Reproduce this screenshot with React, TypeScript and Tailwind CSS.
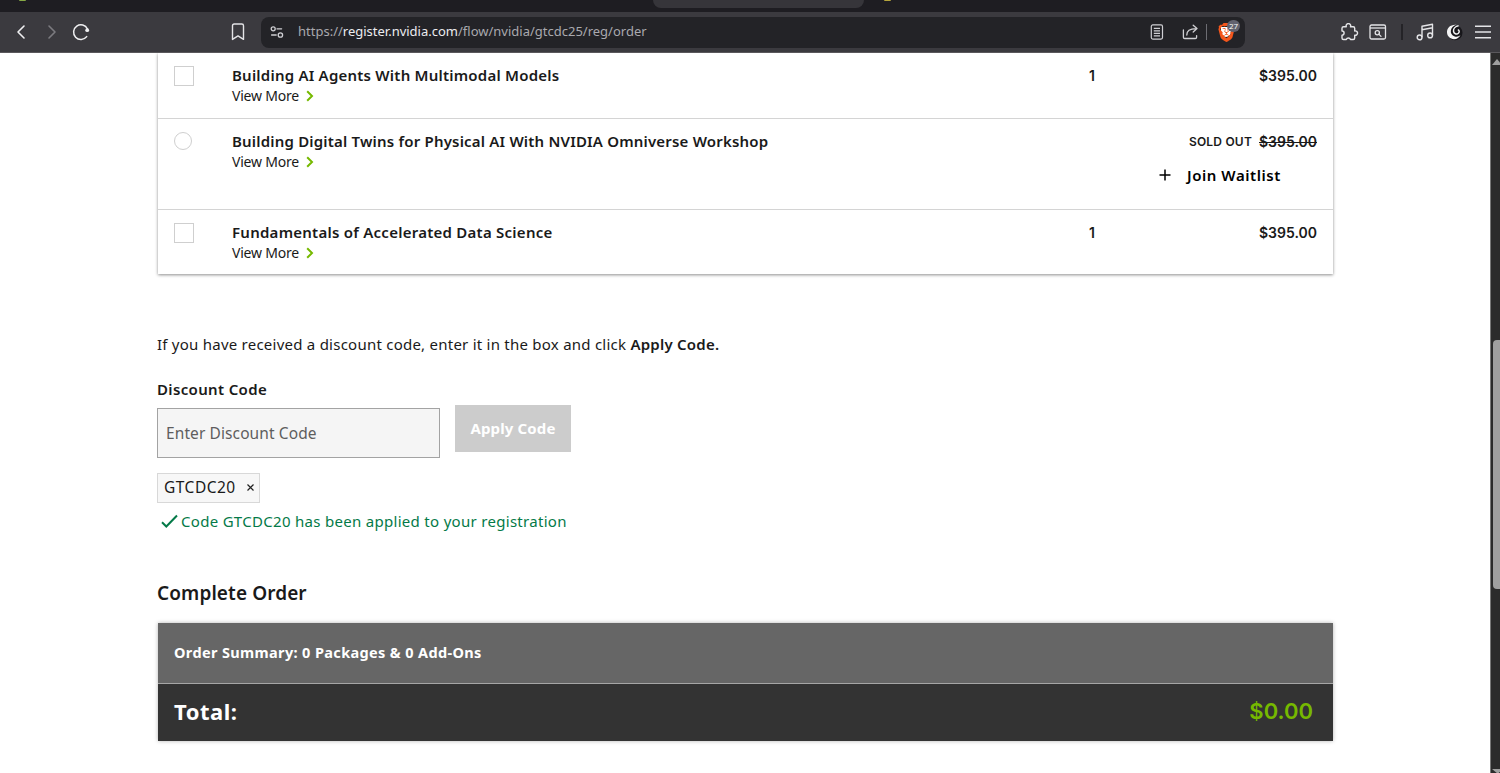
import { ChevronLeft, ChevronRight } from "lucide-react";
import { SiBrave } from "react-icons/si";

type Workshop = {
  title: string;
  titleClass: string;
  soldOut?: boolean;
  rowClass: string;
};

const workshops: Workshop[] = [
  {
    title: "Building AI Agents With Multimodal Models",
    titleClass: "tracking-[0.22px]",
    rowClass: "h-[66px] border-b",
  },
  {
    title: "Building Digital Twins for Physical AI With NVIDIA Omniverse Workshop",
    titleClass: "tracking-[0.19px]",
    soldOut: true,
    rowClass: "h-[91px] border-b",
  },
  {
    title: "Fundamentals of Accelerated Data Science",
    titleClass: "tracking-[0.25px]",
    rowClass: "h-[64px]",
  },
];

function TabStrip() {
  return (
    <div className="flex h-3 items-start bg-[#1e1d22]">
      <div className="ml-[19px] h-px w-[7px] rounded-b-full bg-[#86a845]" />
      <div className="ml-[627px] h-2 w-[211px] rounded-b-lg bg-[#36353a]" />
      <div className="ml-5 h-px w-[7px] rounded-b-full bg-[#b5a53c]" />
    </div>
  );
}

function AddressBar() {
  return (
    <div className="ml-4 flex h-[31px] w-[984px] items-center rounded-lg bg-[#232327]">
      <svg className="ml-[9px]" width="14" height="14" viewBox="0 0 14 14" fill="none" stroke="#cfcfd3" strokeWidth="1.3" strokeLinecap="round">
        <circle cx="3.2" cy="3.8" r="2" />
        <path d="M7 3.8h4.6M1.6 10h4.6" />
        <circle cx="10.4" cy="10" r="2.2" />
      </svg>
      <span className="ml-[14px] font-['Noto_Sans',sans-serif] text-[13px] whitespace-nowrap text-[#a9a9ae]">
        https://<span className="text-[#ececef]">register.nvidia.com</span>/flow/nvidia/gtcdc25/reg/order
      </span>
      <div className="ml-auto flex items-center">
        <svg width="14" height="16" viewBox="0 0 14 16" fill="none" stroke="#cfcfd3" strokeWidth="1.2">
          <rect x="1.3" y="0.9" width="11.2" height="14.2" rx="1.5" />
          <path d="M3.8 4.4h6.2M3.8 6.9h6.2M3.8 9.4h6.2M3.8 11.9h6.2" />
        </svg>
        <svg className="ml-[18px]" width="17" height="16" viewBox="0 0 17 16" fill="none" stroke="#cfcfd3" strokeWidth="1.3" strokeLinecap="round" strokeLinejoin="round">
          <path d="M1.4 6v7.2q0 1.3 1.3 1.3h10.6q1.3 0 1.3-1.300v-1.600" />
          <path d="M4.800 11c0-4 2.600-6.400 9.600-6.400M11.200 1.200l3.800 3.400-3.800 3.400" />
        </svg>
        <div className="ml-[7px] h-4 w-px bg-[#6d6d73]" />
        <div className="relative mr-[11px] ml-[11px] flex h-[18px] w-4 items-center justify-center">
          <div className="absolute top-1 left-[3px] h-[10px] w-[10px] rounded-b-full bg-white" />
          <SiBrave className="relative h-[19px] w-[19px] shrink-0 text-[#f4561c]" />
          <div className="absolute -top-[3px] left-[9px] flex h-3 w-[13px] items-center justify-center rounded-full bg-[#62626f] font-['Open_Sans',sans-serif] text-[8px] leading-3 text-white">
            27
          </div>
        </div>
      </div>
    </div>
  );
}

function Toolbar() {
  return (
    <div className="flex h-[41px] items-center border-b border-[#5a585c] bg-[#3b3a3f]">
      <ChevronLeft className="ml-[9px] text-[#f0f0f2]" size={24} strokeWidth={1.6} />
      <ChevronRight className="ml-[7px] text-[#7c7b80]" size={24} strokeWidth={1.6} />
      <svg className="ml-2" width="18" height="18" viewBox="0 0 18 18" fill="none" stroke="#f0f0f2" strokeWidth="1.5" strokeLinecap="round">
        <path d="M14.700 13.600A7.300 7.300 0 1 1 15.500 6" />
        <circle cx="15.200" cy="7.200" r="1.900" fill="#f0f0f2" stroke="none" />
      </svg>
      <svg className="ml-[141px]" width="14" height="18" viewBox="0 0 14 18" fill="none" stroke="#e4e4e7" strokeWidth="1.4" strokeLinejoin="round">
        <path d="M1.500 2.700q0-1.700 1.700-1.700h7.600q1.700 0 1.700 1.700v13.700L7 12.900 1.500 16.400z" />
      </svg>
      <AddressBar />
      <svg className="ml-[95px]" width="19" height="19" viewBox="0 0 19 19" fill="none" stroke="#e4e4e7" strokeWidth="1.400" strokeLinejoin="round" strokeLinecap="round">
        <path d="M3.500 3.800h2.800a2.300 2.300 0 1 1 4.200 0h2.700q1.500 0 1.500 1.500v2.700a2.200 2.200 0 1 1 0 4.200v2.800q0 1.500-1.500 1.500h-2.700a2.200 2.200 0 0 0-4.200 0H3.500Q2 16.500 2 15v-2.800a2.100 2.100 0 0 0 0-4.200V5.300q0-1.500 1.500-1.500z" />
      </svg>
      <svg className="ml-[10px]" width="18" height="16" viewBox="0 0 18 16" fill="none" stroke="#e4e4e7" strokeWidth="1.300">
        <rect x="1" y="1" width="15.500" height="14" rx="1.500" />
        <path d="M1 4h15.500" />
        <circle cx="8.300" cy="8.700" r="2.100" />
        <path d="M10 10.400l2 2" strokeLinecap="round" />
      </svg>
      <div className="ml-[14px] h-4 w-[2px] bg-[#242327]" />
      <svg className="ml-[13px]" width="18" height="18" viewBox="0 0 18 18" fill="none" stroke="#e4e4e7" strokeWidth="1.400" strokeLinejoin="round">
        <path d="M6 14.300V3.300l10.500-2v11M6 6.800l10.500-2" />
        <circle cx="3.600" cy="14.400" r="2.400" />
        <circle cx="14.100" cy="12.400" r="2.400" />
      </svg>
      <svg className="ml-[12px]" width="17" height="17" viewBox="0 0 17 17">
        <circle cx="9" cy="8.800" r="7.500" fill="#17161a" />
        <path d="M10.500.8C4.500.2.800 4 1 8.600c.2 3.900 3.300 6.600 7 6.600 3 0 5.400-1.500 6.400-3.900-1.500 1.200-3.600 1.700-5.600 1.100C5.800 11.500 4.300 9 4.900 6.200 5.500 3.600 7.700 1.500 10.500.8z" fill="#f4f4f5" />
        <path d="M12.600 1.800C9.400 2.300 7.300 4.600 7.500 7.100c.2 2.500 3 3.800 4.900 2.200 1.300-1.100 1-3.200-.6-3.600" fill="none" stroke="#f4f4f5" strokeWidth="1.500" />
      </svg>
      <svg className="ml-[11px]" width="18" height="14" viewBox="0 0 18 14" stroke="#e4e4e7" strokeWidth="1.400">
        <path d="M1 1.200h16M1 7h16M1 12.800h16" />
      </svg>
    </div>
  );
}

function WorkshopRow({ title, titleClass, soldOut, rowClass }: Workshop) {
  return (
    <div className={`flex border-[#d4d4d4] pt-[13px] pr-4 pl-4 ${rowClass}`}>
      <div className="w-[58px]">
        {soldOut ? (
          <div className="h-[18px] w-[18px] rounded-full border border-[#cfcfcf]" />
        ) : (
          <div className="h-5 w-5 border border-[#cfcfcf]" />
        )}
      </div>
      <div className="flex-1">
        <div className={`mb-[2px] text-[15px] leading-[18px] font-semibold ${titleClass}`}>{title}</div>
        <div className="flex h-5 items-center text-sm leading-5 tracking-[-0.2px]">
          View More
          <svg className="ml-[7px]" width="8" height="12" viewBox="0 0 8 12" fill="none" stroke="#76b900" strokeWidth="2">
            <path d="M1.200 1.200L6 6l-4.800 4.800" />
          </svg>
        </div>
      </div>
      {soldOut ? (
        <div className="w-[158px]">
          <div className="flex items-center justify-end gap-[7px] font-['Inter',sans-serif] text-sm leading-5 font-semibold">
            <span className="text-xs leading-5 tracking-[0.2px]">SOLD OUT</span>
            <span className="line-through">$395.00</span>
          </div>
          <div className="mt-[13px] flex items-center text-black">
            <svg width="12" height="12" viewBox="0 0 12 12" stroke="#000" strokeWidth="1.500">
              <path d="M6 .5v11M.5 6h11" />
            </svg>
            <span className="ml-4 text-[15px] leading-5 font-semibold tracking-[0.55px]">Join Waitlist</span>
          </div>
        </div>
      ) : (
        <div className="flex w-[228px] justify-between font-['Inter',sans-serif] text-sm leading-5 font-semibold">
          <span>1</span>
          <span>$395.00</span>
        </div>
      )}
    </div>
  );
}

function DiscountCode() {
  return (
    <section className="mt-[60px]">
      <p className="text-[15px] leading-5 tracking-[0.24px]">
        If you have received a discount code, enter it in the box and click{" "}
        <strong className="font-semibold">Apply Code.</strong>
      </p>
      <label className="mt-[25px] block text-[15px] leading-5 font-semibold tracking-[0.35px]">Discount Code</label>
      <div className="mt-[6px] flex items-start">
        <input
          className="mt-[3px] h-[50px] w-[283px] border border-[#a3a3a3] bg-[#f5f5f5] px-2 pb-px text-[15.5px] tracking-[0.1px] placeholder:text-[#5e5e5e]"
          placeholder="Enter Discount Code"
        />
        <button className="ml-[15px] h-[47px] w-[116px] bg-[#ccc] text-[15px] font-bold tracking-[0.15px] text-white">
          Apply Code
        </button>
      </div>
      <div className="mt-[15px] flex h-[30px] w-[103px] items-center border border-[#d8d8d8] bg-[#f7f7f7] pb-px pl-[6px] text-[15.5px] tracking-[0.5px]">
        GTCDC20
        <svg className="ml-[11px]" width="7" height="7" viewBox="0 0 7 7" stroke="#222" strokeWidth="1.200">
          <path d="M.5.5l6 6M6.500.5l-6 6" />
        </svg>
      </div>
      <div className="mt-2 flex h-5 items-center pl-1 text-[15px] leading-5 tracking-[0.3px] text-[#047a48]">
        <svg className="mr-[3px]" width="17" height="14" viewBox="0 0 17 14" fill="none" stroke="#047a48" strokeWidth="2">
          <path d="M1 8.200l4.300 4.300L16 1.500" />
        </svg>
        Code GTCDC20 has been applied to your registration
      </div>
    </section>
  );
}

function OrderSummary() {
  return (
    <section className="mt-12">
      <h2 className="text-[19px] leading-7 font-semibold tracking-[0.1px]">Complete Order</h2>
      <div className="mt-4 ml-px w-[1175px] shadow-[0_0_4px_rgba(0,0,0,0.3)]">
        <div className="flex h-[61px] items-center border-b border-[#a6a6a6] bg-[#666] px-4 pb-px text-[14.5px] font-bold tracking-[0.36px] text-white">
          Order Summary: 0 Packages &amp; 0 Add-Ons
        </div>
        <div className="flex h-[57px] items-center justify-between bg-[#333] pr-5 pb-[2px] pl-4 text-[22px] font-bold text-white">
          <span className="tracking-[0.5px]">Total:</span>
          <span className="font-['Inter',sans-serif] font-semibold text-[#76b900]">$0.00</span>
        </div>
      </div>
    </section>
  );
}

function Scrollbar() {
  return (
    <div className="flex w-[9px] flex-col items-end bg-[#2b2b2b]">
      <svg className="mt-[6px]" width="8" height="6" viewBox="0 0 8 6" fill="#9f9f9f">
        <path d="M0 6l5-6 5 6z" />
      </svg>
      <div className="mt-[275px] h-[249px] w-[7px] rounded-l-[4px] bg-[#9f9f9f]" />
      <svg className="mt-auto" width="8" height="4" viewBox="0 0 8 4" fill="#9f9f9f">
        <path d="M0 0h10l-4 5z" />
      </svg>
    </div>
  );
}

export default function App() {
  return (
    <div className="flex h-[773px] w-[1500px] flex-col overflow-hidden bg-white">
      <TabStrip />
      <Toolbar />
      <div className="flex min-h-0 flex-1">
        <main className="flex-1 overflow-hidden border-r border-[#777] pl-[157px] font-['Noto_Sans',sans-serif] text-[#1a1a1a]">
          <div className="ml-px w-[1175px] shadow-[0_1px_3px_rgba(0,0,0,0.45)]">
            {workshops.map((workshop) => (
              <WorkshopRow key={workshop.title} {...workshop} />
            ))}
          </div>
          <DiscountCode />
          <OrderSummary />
        </main>
        <Scrollbar />
      </div>
    </div>
  );
}
